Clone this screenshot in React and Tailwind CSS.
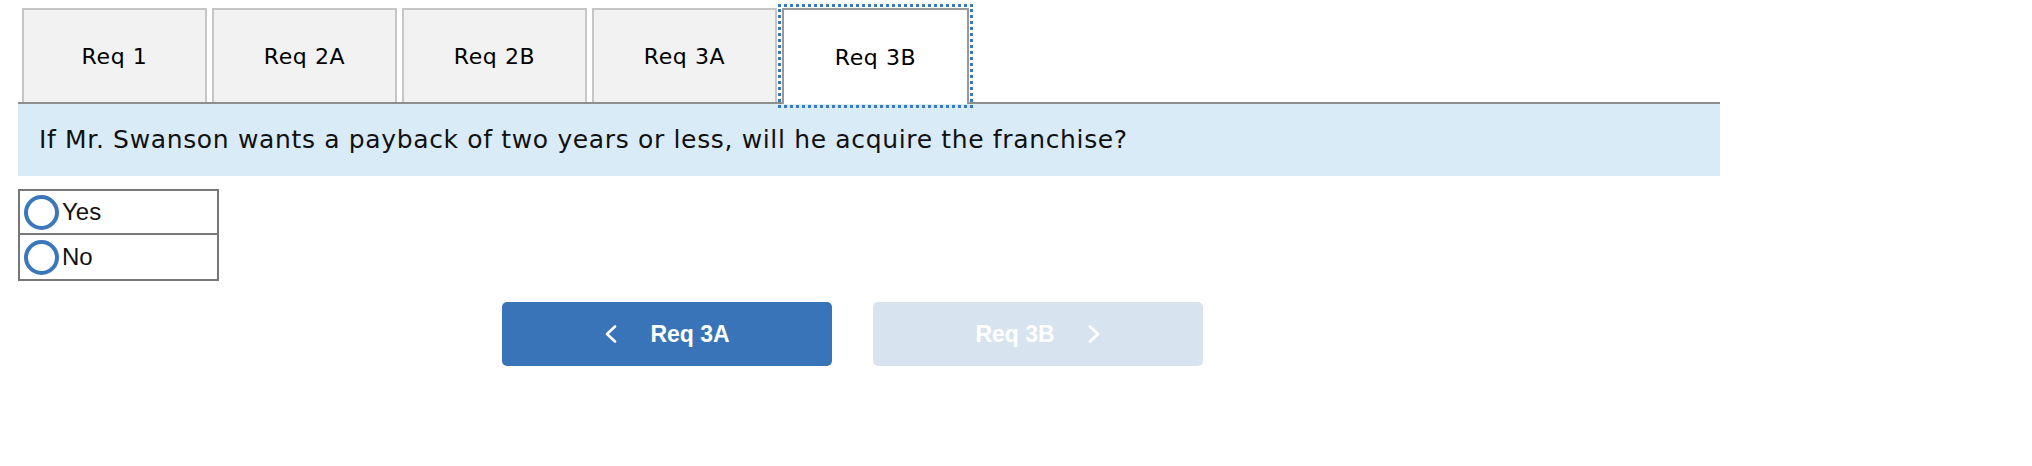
import React from 'react';

const tabs = ['Req 1', 'Req 2A', 'Req 2B', 'Req 3A', 'Req 3B'];
const activeTab = 'Req 3B';

function Chevron({ dir }) {
  return (
    <svg width="14" height="18" viewBox="0 0 14 18" fill="none" stroke="currentColor" strokeWidth="2.6" strokeLinecap="round" strokeLinejoin="round">
      {dir === 'left' ? <polyline points="11,1.5 3,9 11,16.5" /> : <polyline points="3,1.5 11,9 3,16.5" />}
    </svg>
  );
}

function RadioRow({ label, last }) {
  return (
    <label className={`flex items-center h-[44px] pl-[4px] gap-[3px] cursor-pointer ${last ? '' : 'border-b-2 border-[#777777]'}`}>
      <span className="w-[35px] h-[35px] rounded-full border-[4px] border-[#3b77bb] bg-white shrink-0" />
      <span className="text-[24px] text-[#111] leading-none" style={{ fontFamily: '"Liberation Sans", Arial, sans-serif' }}>{label}</span>
    </label>
  );
}

export default function App() {
  return (
    <div className="w-[2032px] h-[466px] bg-white pl-[18px] pt-[8px]" style={{ fontFamily: '"DejaVu Sans", Verdana, sans-serif' }}>
      <div className="w-[1702px]">
        {/* Tabs */}
        <div className="flex gap-[5px] pl-[4px] border-b-2 border-[#8e8e8e]">
          {tabs.map((t) =>
            t === activeTab ? (
              <button
                key={t}
                className="w-[187px] h-[96px] -mb-[2px] bg-white border-2 border-b-0 border-[#999999] outline-[3px] outline-dotted outline-[#3b78c2] outline-offset-[1px] flex items-center justify-center text-[22px] tracking-[0.6px] text-black"
              >
                {t}
              </button>
            ) : (
              <button
                key={t}
                className="w-[185px] h-[94px] bg-[#f2f2f2] border-2 border-b-0 border-[#c6c6c6] flex items-center justify-center text-[22px] tracking-[0.6px] text-black"
              >
                {t}
              </button>
            )
          )}
        </div>

        {/* Question */}
        <div className="h-[72px] bg-[#daebf8] flex items-center pl-[21px] text-[25px] tracking-[0.65px] text-[#111]">
          If Mr. Swanson wants a payback of two years or less, will he acquire the franchise?
        </div>
      </div>

      {/* Answer options */}
      <div className="mt-[13px] w-[201px] border-2 border-[#777777]">
        <RadioRow label="Yes" />
        <RadioRow label="No" last />
      </div>

      {/* Navigation */}
      <div className="mt-[21px] flex gap-[41px] pl-[484px]" style={{ fontFamily: '"Liberation Sans", Arial, sans-serif' }}>
        <button className="w-[330px] h-[64px] rounded-[5px] bg-[#3874b7] text-white font-bold text-[23px] flex items-center justify-center gap-[32px]">
          <Chevron dir="left" />
          <span>Req 3A</span>
        </button>
        <button disabled className="w-[330px] h-[64px] rounded-[5px] bg-[#d8e3f0] text-white font-bold text-[23px] flex items-center justify-center gap-[32px]">
          <span>Req 3B</span>
          <Chevron dir="right" />
        </button>
      </div>
    </div>
  );
}
